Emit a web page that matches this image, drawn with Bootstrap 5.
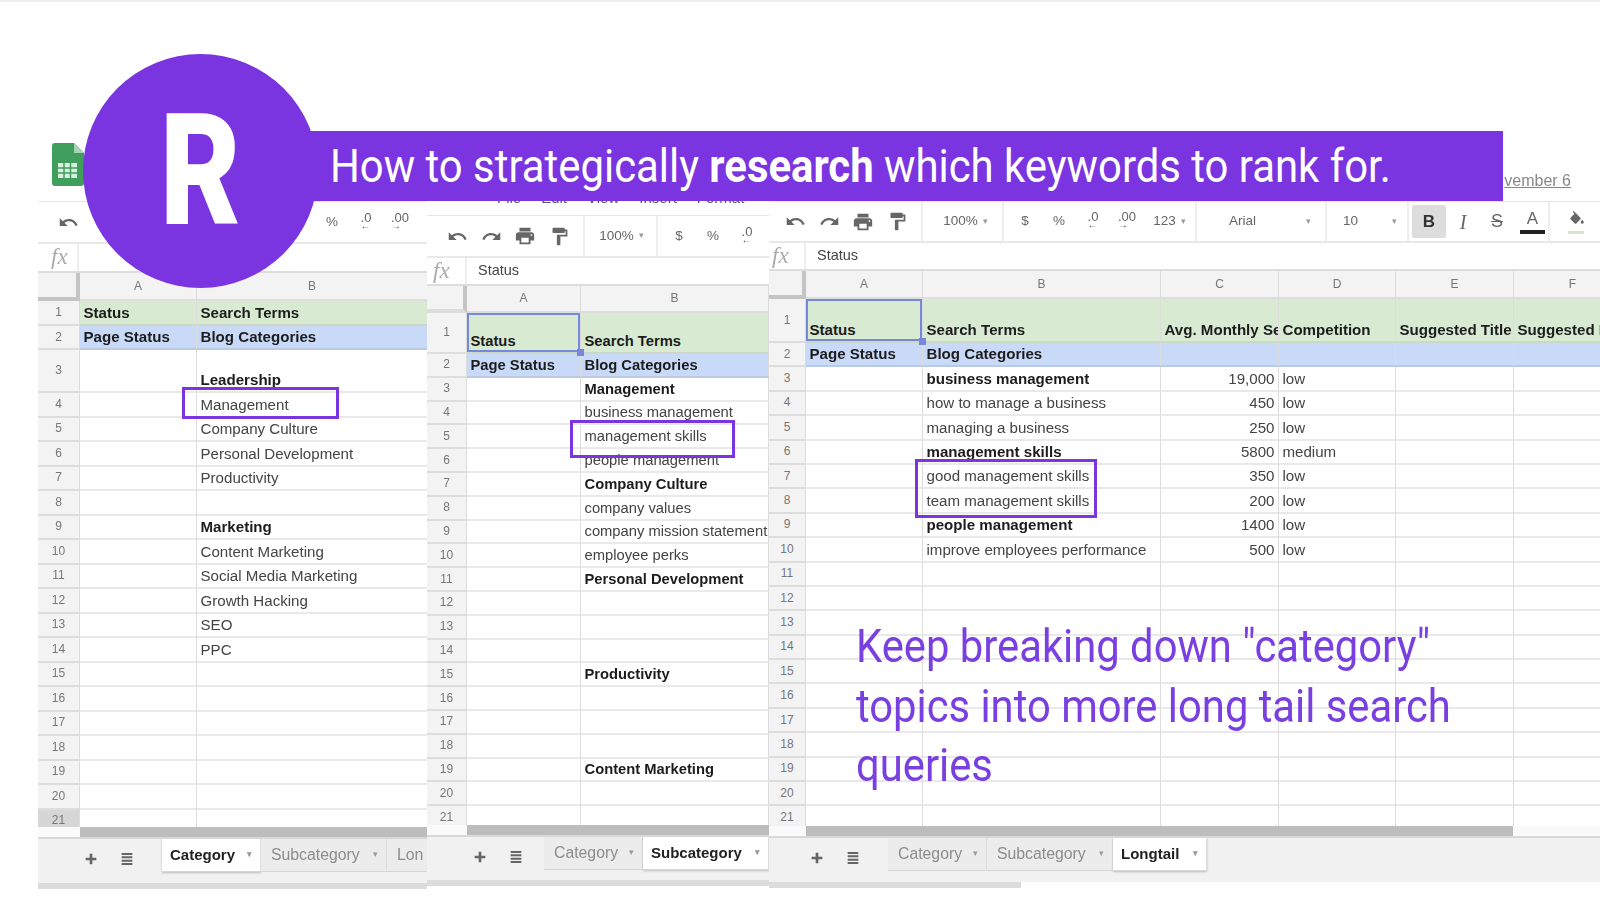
<!DOCTYPE html>
<html lang="en">
<head>
  <meta charset="UTF-8"/>
  <title>How to strategically research keywords</title>
  <link href="https://cdn.jsdelivr.net/npm/bootstrap@5.3.0/dist/css/bootstrap.min.css" rel="stylesheet"/>
  <style>
    html, body { height: 900px; overflow: hidden; background: #fff; }
    body { font-family: "Liberation Sans", Arial, sans-serif; color: #333; }
    .page { position: relative; width: 1600px; height: 900px; overflow: hidden; border-top: 2px solid #eee; }
    .shots { filter: blur(.6px); }

    .doc-head { height: 46px; margin-top: 141px; padding: 0 29px 0 52px; }
    .last-edit { font-size: 16px; color: #888; text-decoration: underline; margin-top: 26px; }
    .sheet-row { margin-left: 38px; }

    .sheet { flex: none; overflow: hidden; background: #fff; }
    .sheet-1 { width: 389px; margin-top: 12px; }
    .sheet-2 { width: 342px; }
    .sheet-3 { width: 831px; margin-top: 12px; }
    .menu-row { height: 26px; padding: 1px 0 0 70px; gap: 20px; font-size: 15px; color: #555; line-height: 15px; }

    .toolbar { height: 43px; padding-left: 13px; border-top: 1px solid #e6e6e6; border-bottom: 2px solid #e8e8e8; color: #666; font-size: 13.5px; background: #fff; white-space: nowrap; }
    .sheet-3 .toolbar { padding-left: 9px; height: 42px; }
    .sheet-1 .tb:nth-child(2) svg { visibility: hidden; }
    .tb { width: 34px; flex: none; height: 100%; }
    .tb svg { fill: #666; }
    .tb-div { border-left: 2px solid #eee; }
    .tb-zoom { width: 81px; padding-left: 6px; margin-left: 7px; }
    .sheet-2 .tb-zoom { width: 73px; padding-left: 2px; }
    .tb-dollar { margin-left: 4px; }
    .tb-123 { width: 51px; }
    .tb-font { width: 130px; padding: 0 14px 0 32px; }
    .tb-size { width: 82px; padding: 0 10px 0 16px; }
    .tb-bold { margin-left: 3px; font-weight: 700; font-size: 17px; color: #333; background: #ddd; height: 33px; width: 34px; border-radius: 2px; }
    .tb-italic { font-family: "Liberation Serif", serif; font-style: italic; font-size: 20px; }
    .tb-strike { font-size: 18px; text-decoration: line-through; }
    .tb-color { font-size: 17px; line-height: 17px; margin-left: 3px; }
    .tb-color i { display: block; width: 25px; height: 4px; background: #222; margin-top: 3px; }
    .tb-fill { margin-left: 10px; }
    .tb-fill i { display: block; width: 16px; height: 3px; background: #d9e5cf; margin-top: 1px; }
    .caret { font-size: 9px; color: #999; margin-left: 5px; }
    .dec { font-size: 13px; line-height: 11px; position: relative; top: -2px; }
    .dec small { display: block; font-size: 10px; line-height: 6px; color: #555; }

    .formula { height: 29px; border-bottom: 2px solid #ddd; font-size: 14.5px; color: #444; }
    .sheet-2 .formula, .sheet-3 .formula { height: 28px; }
    .fx { font-family: "Liberation Serif", serif; font-style: italic; font-size: 23px; color: #aaa; width: 41px; padding-left: 13px; border-right: 2px solid #eee; height: 100%; line-height: 26px; }
    .sheet-2 .fx { width: 40px; padding-left: 6px; }
    .sheet-3 .fx { width: 37px; padding-left: 3px; }
    .formula span { padding-left: 11px; }

    .grid { overflow: hidden; }
    .sheet-1 .grid { height: 554px; }
    .sheet-2 .grid { height: 539px; }
    .sheet-3 .grid { height: 555px; }
    .line { height: 24.5px; }
    .sheet-2 .line { height: 23.8px; }
    .sheet-3 .line { height: 24.4px; }
    .sheet-1 .line.hdr, .sheet-3 .line.hdr { height: 28px; }
    .sheet-2 .line.hdr { height: 27px; }
    .sheet-1 .line.r1 { height: 25px; }
    .sheet-1 .line.r2 { height: 24px; }
    .sheet-1 .line.r3 { height: 43px; }
    .sheet-2 .line.r1 { height: 41px; }
    .sheet-3 .line.r1 { height: 44px; }

    .cell { flex: none; height: 100%; padding: 0 3.5px 1px; border-right: 1px solid #dcdcdc; border-bottom: 2px solid #e9e9e9; font-size: 15.1px; line-height: 20px; color: #444; white-space: nowrap; overflow: hidden; display: flex; align-items: flex-end; position: relative; }
    .sheet-2 .cell { font-size: 14.75px; }
    .cell.num { justify-content: flex-end; }
    .cell b { color: #1c1c1c; }
    .cell.head, .sheet-2 .cell.head { background: #f3f3f3; justify-content: center; align-items: center; color: #777; font-size: 12px; border-bottom-color: #ddd; }
    .cell.corner { border-right: 4px solid #c4c4c4; border-bottom: 4px solid #c4c4c4; }
    .cell.dark { background: #d6d6d6; }
    .green .cell:not(.head) { background: #d9ead3; border-bottom-color: #ccd9c8; }
    .blue .cell:not(.head) { background: #c9daf8; border-bottom-color: #b9c9e6; }
    .cell.sel { box-shadow: inset 0 0 0 2px #7488dc; overflow: visible; }
    .cell.sel::after { content: ""; position: absolute; right: -4px; bottom: -4px; width: 7px; height: 7px; background: #7488dc; z-index: 2; }

    .hbar { height: 10px; background: #fafafa; }
    .hbar i { display: block; height: 100%; background: #bdbdbd; }
    .sheet-1 .hbar i { margin-left: 42px; }
    .sheet-2 .hbar i { margin-left: 40px; }
    .sheet-3 .hbar i { margin-left: 37px; width: 707px; }

    .tabbar { height: 46px; background: #f1f1f1; border-top: 2px solid #d8d8d8; color: #666; }
    .sheet-2 .tabbar { height: 45px; }
    .tabbar svg { fill: #666; flex: none; margin-top: 12px; }
    .add { margin-left: 45px; }
    .sheet-3 .add { margin-left: 40px; }
    .lst { margin-left: 20px; }
    .tabs { margin-left: 27px; }
    .sheet-2 .tabs { margin-left: 20px; }
    .sheet-3 .tabs { margin-left: 27px; }
    .tab { height: 33px; background: #ececec; border-right: 1px solid #ddd; border-bottom: 1px solid #d6d6d6; color: #8c8c8c; font-size: 15.8px; padding: 0 8px 0 10px; white-space: nowrap; }
    .tab.on { background: #fff; color: #222; font-size: 15px; font-weight: 700; padding-left: 8px; box-shadow: 0 1px 2px #bbb; }
    .tab-category { width: 99px; }
    .tab-subcategory { width: 126px; }
    .tab-longtail { width: 94px; }
    .strip { height: 6px; background: #dcdcdc; }
    .sheet-3 .strip { width: 252px; }

    .sheets-icon { width: 32px; height: 43px; flex: none; }

    .banner { position: absolute; left: 300px; top: 129px; width: 1203px; height: 70px; background: #7a35e0; color: #fff; font-family: Roboto, sans-serif; font-size: 46px; line-height: 70px; white-space: nowrap; padding-left: 30px; }
    .banner span { display: inline-block; transform: scaleX(.91); transform-origin: left center; }
    .logo { position: absolute; left: 83px; top: 52px; width: 235px; height: 234px; border-radius: 50%; background: #7a35e0; color: #fff; font-family: Roboto, sans-serif; font-weight: 900; font-size: 155px; line-height: 234px; text-align: center; }
    .logo span { display: inline-block; transform: scaleX(.8); }
    .pick { position: absolute; border: 3px solid #7a35e0; }
    .note { position: absolute; left: 856px; top: 615px; color: #7a3fe0; font-family: Roboto, sans-serif; font-size: 46px; line-height: 59.5px; white-space: nowrap; transform: scaleX(.908); transform-origin: left top; }
  </style>
</head>
<body>
  <svg width="0" height="0" class="position-absolute">
    <symbol id="i-undo" viewBox="0 0 24 24"><path d="M12.5 8c-2.65 0-5.05.99-6.9 2.6L2 7v9h9l-3.62-3.62c1.39-1.16 3.16-1.88 5.12-1.88 3.54 0 6.55 2.31 7.6 5.5l2.37-.78C21.08 11.03 17.15 8 12.5 8z"/></symbol>
    <symbol id="i-redo" viewBox="0 0 24 24"><path d="M18.4 10.6C16.55 8.99 14.15 8 11.5 8c-4.65 0-8.58 3.03-9.97 7.22L3.9 16c1.05-3.19 4.05-5.5 7.6-5.5 1.95 0 3.73.72 5.12 1.88L13 16h9V7l-3.6 3.6z"/></symbol>
    <symbol id="i-print" viewBox="0 0 24 24"><path d="M19 8H5c-1.66 0-3 1.34-3 3v6h4v4h12v-4h4v-6c0-1.66-1.34-3-3-3zm-3 11H8v-5h8v5zm3-7c-.55 0-1-.45-1-1s.45-1 1-1 1 .45 1 1-.45 1-1 1zm-1-9H6v4h12V3z"/></symbol>
    <symbol id="i-paint" viewBox="0 0 24 24"><path d="M18 4V3c0-.55-.45-1-1-1H5c-.55 0-1 .45-1 1v4c0 .55.45 1 1 1h12c.55 0 1-.45 1-1V6h1v4H9v11c0 .55.45 1 1 1h2c.55 0 1-.45 1-1v-9h8V4h-3z"/></symbol>
    <symbol id="i-fill" viewBox="0 0 24 24"><path d="M16.56 8.94L7.62 0 6.21 1.41l2.38 2.38-5.15 5.15c-.59.59-.59 1.54 0 2.12l5.5 5.5c.29.29.68.44 1.06.44s.77-.15 1.06-.44l5.5-5.5c.59-.58.59-1.53 0-2.12zM19 11.5s-2 2.17-2 3.5c0 1.1.9 2 2 2s2-.9 2-2c0-1.33-2-3.5-2-3.5z"/></symbol>
    <symbol id="i-add" viewBox="0 0 24 24"><path d="M10 4h4v6h6v4h-6v6h-4v-6H4v-4h6z"/></symbol>
    <symbol id="i-list" viewBox="0 0 24 24"><path d="M4 3h16v3H4zM4 8h16v3H4zM4 13h16v3H4zM4 18h16v3H4z"/></symbol>
  </svg>

  <div class="page">
    <div class="shots">
      <div class="doc-head d-flex justify-content-between">
        <svg class="sheets-icon" viewBox="0 0 32 43">
          <path d="M3 0h19l10 10v30a3 3 0 0 1-3 3H3a3 3 0 0 1-3-3V3a3 3 0 0 1 3-3z" fill="#3f9e5c"/>
          <path d="M22 0l10 10H22z" fill="#a6d3b4"/>
          <path d="M6 20h19v15H6z" fill="#d8efdf"/>
          <path d="M12 20v15M18.500 20v15M6 25h19M6 30h19" stroke="#3f9e5c" stroke-width="1.500"/>
        </svg>
        <div class="last-edit">vember 6</div>
      </div>
      <div class="sheet-row d-flex align-items-start">
        <div class="sheet sheet-1" id="sheet1"></div>
        <div class="sheet sheet-2" id="sheet2"></div>
        <div class="sheet sheet-3" id="sheet3"></div>
      </div>
    </div>

    <div class="banner"><span>How to strategically <b>research</b> which keywords to rank for.</span></div>
    <div class="logo"><span>R</span></div>
    <div class="pick" style="left:182px;top:385px;width:157px;height:32px"></div>
    <div class="pick" style="left:570px;top:418px;width:165px;height:38px"></div>
    <div class="pick" style="left:915px;top:457px;width:182px;height:59px"></div>
    <div class="note">Keep breaking down "category"<br>topics into more long tail search<br>queries</div>
  </div>

  <script src="https://cdn.jsdelivr.net/npm/bootstrap@5.3.0/dist/js/bootstrap.bundle.min.js"></script>
  <script>
    const sheets = [
      {
        id: "sheet1", head: [42, 117, 231], letters: ["A", "B"], darkLast: true, formula: "",
        rows: [
          ["*Status", "*Search Terms"], ["*Page Status", "*Blog Categories"],
          ["", "*Leadership"], ["", "Management"], ["", "Company Culture"], ["", "Personal Development"],
          ["", "Productivity"], [], ["", "*Marketing"], ["", "Content Marketing"], ["", "Social Media Marketing"],
          ["", "Growth Hacking"], ["", "SEO"], ["", "PPC"], [], [], [], [], [], [], []
        ],
        tabs: [["Category", true], ["Subcategory"], ["Lon"]]
      },
      {
        id: "sheet2", head: [40, 114, 188], letters: ["A", "B"], sel: true, formula: "Status",
        rows: [
          ["*Status", "*Search Terms"], ["*Page Status", "*Blog Categories"],
          ["", "*Management"], ["", "business management"], ["", "management skills"], ["", "people management"],
          ["", "*Company Culture"], ["", "company values"], ["", "company mission statement"], ["", "employee perks"],
          ["", "*Personal Development"], [], [], [], ["", "*Productivity"], [], [], [], ["", "*Content Marketing"], [], []
        ],
        tabs: [["Category"], ["Subcategory", true]]
      },
      {
        id: "sheet3", head: [37, 117, 238, 118, 117, 118, 118], letters: ["A", "B", "C", "D", "E", "F"], sel: true, formula: "Status",
        rows: [
          ["*Status", "*Search Terms", "*Avg. Monthly Searches", "*Competition", "*Suggested Title", "*Suggested Page"],
          ["*Page Status", "*Blog Categories"],
          ["", "*business management", "#19,000", "low"], ["", "how to manage a business", "#450", "low"],
          ["", "managing a business", "#250", "low"], ["", "*management skills", "#5800", "medium"],
          ["", "good management skills", "#350", "low"], ["", "team management skills", "#200", "low"],
          ["", "*people management", "#1400", "low"], ["", "improve employees performance", "#500", "low"],
          [], [], [], [], [], [], [], [], [], [], []
        ],
        tabs: [["Category"], ["Subcategory"], ["Longtail", true]]
      }
    ];

    function icon(name, size) {
      return `<svg width="${size}" height="${size}"><use href="#i-${name}"/></svg>`;
    }

    function toolbar() {
      const slot = (html, cls = "") => `<div class="tb d-flex align-items-center justify-content-center ${cls}">${html}</div>`;
      const caret = `<span class="caret">▾</span>`;
      return `<div class="toolbar d-flex align-items-center">
        ${slot(icon("undo", 21))}${slot(icon("redo", 21))}${slot(icon("print", 22))}${slot(icon("paint", 21))}
        ${slot(`100%${caret}`, "tb-div tb-zoom")}
        <div class="tb-div h-100"></div>
        ${slot("$", "tb-dollar")}${slot("%")}
        ${slot(`<span class="dec">.0<small>←</small></span>`)}${slot(`<span class="dec">.00<small>→</small></span>`)}
        ${slot(`123${caret}`, "tb-123")}
        <div class="tb tb-div tb-font d-flex align-items-center justify-content-between">Arial${caret}</div>
        <div class="tb tb-div tb-size d-flex align-items-center justify-content-between">10${caret}</div>
        <div class="tb-div h-100"></div>
        ${slot("B", "tb-bold")}${slot("I", "tb-italic")}${slot("S", "tb-strike")}
        ${slot(`<span class="tb-color text-center">A<i></i></span>`)}
        <div class="tb-div h-100"></div>
        ${slot(`<span>${icon("fill", 18)}<i></i></span>`, "tb-fill")}
      </div>`;
    }

    function renderCell(text, width, selected) {
      let cls = "cell", inner = text || "";
      if (inner[0] === "*") inner = `<b>${inner.slice(1)}</b>`;
      if (inner[0] === "#") { inner = inner.slice(1); cls += " num"; }
      if (selected) cls += " sel";
      return `<div class="${cls}" style="width:${width}px">${inner}</div>`;
    }

    function renderSheet(s) {
      const cols = s.head;
      const hdr = `<div class="line hdr d-flex"><div class="cell head corner" style="width:${cols[0]}px"></div>` +
        cols.slice(1).map((w, i) => `<div class="cell head" style="width:${w}px">${s.letters[i] || ""}</div>`).join("") + `</div>`;
      const body = s.rows.map((row, r) => {
        const n = r + 1;
        let cls = `line r${n} d-flex`;
        if (n === 1) cls += " green";
        if (n === 2) cls += " blue";
        const dark = s.darkLast && n === 21 ? " dark" : "";
        let cells = `<div class="cell head${dark}" style="width:${cols[0]}px">${n}</div>`;
        cols.slice(1).forEach((w, i) => { cells += renderCell(row[i], w, s.sel && n === 1 && i === 0); });
        return `<div class="${cls}">${cells}</div>`;
      }).join("");
      const tabs = s.tabs.map(([name, on]) =>
        `<div class="tab tab-${name.toLowerCase()} ${on ? "on" : ""} d-flex align-items-center justify-content-between">${name}${name === "Lon" ? "" : `<span class="caret">▾</span>`}</div>`).join("");
      const menu = s.id === "sheet2"
        ? `<div class="menu-row d-flex"><span>File</span><span>Edit</span><span>View</span><span>Insert</span><span>Format</span></div>` : "";
      document.getElementById(s.id).innerHTML = `${menu}${toolbar()}
        <div class="formula d-flex align-items-center"><div class="fx">fx</div><span>${s.formula}</span></div>
        <div class="grid">${hdr}${body}</div>
        <div class="hbar"><i></i></div>
        <div class="tabbar d-flex align-items-start">
          <svg class="add" width="16" height="16"><use href="#i-add"/></svg>
          <svg class="lst" width="16" height="16"><use href="#i-list"/></svg>
          <div class="tabs d-flex">${tabs}</div>
        </div>
        <div class="strip"></div>`;
    }

    sheets.forEach(renderSheet);
  </script>
</body>
</html>
